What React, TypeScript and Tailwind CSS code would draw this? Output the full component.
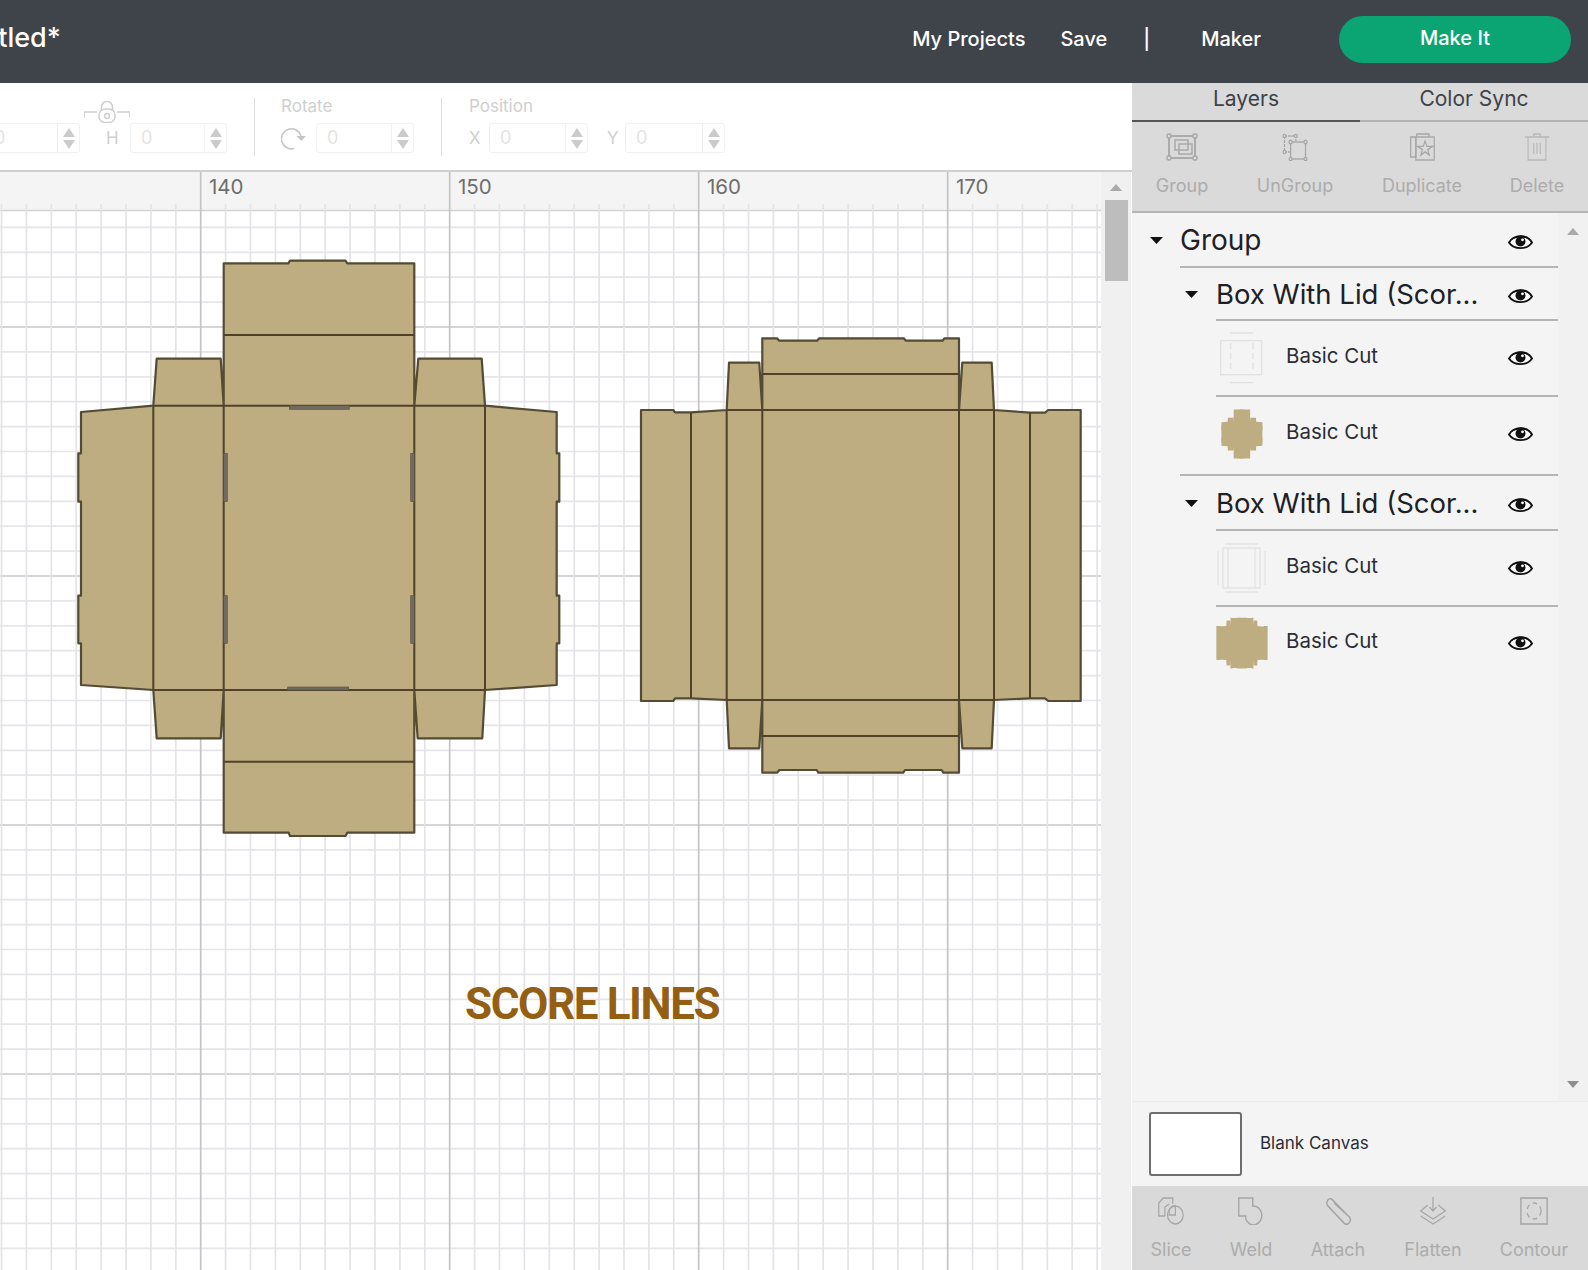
import type { ReactNode } from 'react';

const BOX_ONE =
  'M223.7 263.3H288.3L290 260.7H345.5L347.3 263.3H414.3V405.7L418.3 358.7H481.7L485 405.7L556.7 412V453.3H559.3V501.7H556.7V595.7H559.3V643.3H556.7V685L485 690L482.3 738.3H417.7L414.3 690V832.7H347.3L345.5 836H290L288.7 832.7H223.7V690L220.7 738.3H156.7L153.3 690L81 685V643.3H78.3V595.7H81V501.7H78.3V453.3H81V412L153.3 405.7L156.7 358.7H220.7L223.7 405.7Z';
const BOX_ONE_SCORES =
  'M153.3 405.7H485M153.3 690H485M153.3 405.7V690M223.7 405.7V690M414.3 405.7V690M485 405.7V690M223.7 335H414.3M223.7 761.7H414.3';
const BOX_TWO =
  'M762.3 338.3H777.3L779 340.7H817.3L819 338.3H904L905.7 340.7H942.7L944.3 338.3H959V410L962.3 362.7H991.7L994 410L1030 412.7H1045L1048.3 410H1080.7V701H1048.3L1045 698.3H1030L994 700L991.7 748.3H962.3L959 700V772.7H943.3L941.7 770H905L903.3 772.7H818.3L816.7 770H779.3L777.3 772.7H762.3V700L759.3 748.3H729L726.7 700L691 698.3H675L673.3 701H641V410H673.3L675 412.3H691L726.7 410L729 362.7H759.3L762.3 410Z';
const BOX_TWO_SCORES =
  'M726.7 410H994M726.7 700H994M726.7 410V700M762.3 410V700M959 410V700M994 410V700M691 412.7V698.3M1030 412.7V698.3M762.3 374H959M762.3 736H959';

const MINOR = 24.9;

function Grid() {
  const columns = Array.from({ length: 45 }, (_, i) => i * MINOR + 1.5);
  const rows = Array.from({ length: 43 }, (_, i) => 227.4 + i * MINOR);

  return (
    <svg viewBox="0 172 1101 1098" className="absolute left-0 top-0 h-[1098px] w-[1101px] blur-[0.4px]">
      {rows.map((y, i) => (
        <line key={y} x1="0" x2="1101" y1={y} y2={y} stroke={(i - 4) % 10 === 0 ? '#c9c9cc' : '#e6e6ea'} strokeWidth={1.7} />
      ))}
      <line x1="0" x2="1101" y1="210.5" y2="210.5" stroke="#d4d4d4" strokeWidth={1.6} />
      {columns.map((x, i) =>
        (i - 8) % 10 === 0 ? (
          <line key={x} x1={x} x2={x} y1="172" y2="1270" stroke="#c4c4c6" strokeWidth={1.7} />
        ) : (
          <line key={x} x1={x} x2={x} y1="204" y2="1270" stroke="#e4e4e8" strokeWidth={1.7} />
        ),
      )}
      <path d={BOX_ONE} fill="#bdad80" stroke="#544b35" strokeWidth={2.2} strokeLinejoin="round" />
      <path d={BOX_ONE_SCORES} fill="none" stroke="#4f4229" strokeWidth={2} />
      <g fill="#6f6b60" stroke="#57523f" strokeWidth={0.6}>
        <rect x="289.3" y="405.7" width="60" height="3.6" />
        <rect x="287.7" y="687" width="61" height="3" />
        <rect x="223.7" y="453.3" width="3.6" height="48.4" />
        <rect x="223.7" y="595.7" width="3.6" height="47.6" />
        <rect x="410.7" y="453.3" width="3.6" height="48.4" />
        <rect x="410.7" y="595.7" width="3.6" height="47.6" />
      </g>
      <path d={BOX_TWO} fill="#bdad80" stroke="#544b35" strokeWidth={2.2} strokeLinejoin="round" />
      <path d={BOX_TWO_SCORES} fill="none" stroke="#4f4229" strokeWidth={2} />
    </svg>
  );
}

function Stepper() {
  return (
    <svg viewBox="0 0 12 21" className="h-[21px] w-[12px]" fill="#cbcbcb">
      <path d="M6 0L12 9H0Z" />
      <path d="M6 21L12 12H0Z" />
    </svg>
  );
}

function NumberBox({ width }: { width: string }) {
  return (
    <div className={`flex h-[30px] items-stretch rounded-[3px] border border-[#f1f1f1] ${width}`}>
      <span className="flex-1 pl-[10px] text-[18px] leading-[28px] text-[#e4e4e4]">0</span>
      <span className="flex w-[22px] items-center justify-center border-l border-[#f1f1f1]">
        <Stepper />
      </span>
    </div>
  );
}

function Toolbar() {
  return (
    <div className="flex h-[89px] shrink-0 border-b-2 border-[#cfcfcf] bg-white text-[#cfcfcf]">
      <div className="ml-[-17px] flex flex-col">
        <div className="h-[40px] pl-[101px] pt-[18px]">
          <svg viewBox="0 0 46 22" className="h-[22px] w-[46px]" fill="none" stroke="#cfcfcf" strokeWidth={1.5}>
            <path d="M0 17V11H13M46 17V11H33" />
            <path d="M17.5 9V6a5.5 5.5 0 0 1 11 0V9" />
            <rect x="15" y="8" width="16" height="13.5" rx="6" />
            <circle cx="23" cy="15" r="2.4" />
          </svg>
        </div>
        <div className="flex items-center">
          <NumberBox width="w-[97px]" />
          <span className="ml-[26px] w-[24px] pt-[1px] text-[17px]">H</span>
          <NumberBox width="w-[97px]" />
        </div>
      </div>
      <div className="ml-[27px] mr-[26px] mt-[15px] h-[58px] w-px bg-[#dcdcdc]" />
      <div className="flex flex-col">
        <div className="h-[40px] pt-[11px] text-[17px] leading-[24px]">Rotate</div>
        <div className="flex items-center">
          <svg viewBox="0 0 26 23" className="mr-[9px] h-[23px] w-[26px]" fill="none" stroke="#c6c6c6" strokeWidth={1.6}>
            <path d="M20 9A10 10 0 1 0 13 21.5" />
            <path d="M15.5 9H25L20.2 14Z" fill="#c6c6c6" stroke="none" />
          </svg>
          <NumberBox width="w-[98px]" />
        </div>
      </div>
      <div className="mx-[27px] mt-[15px] h-[58px] w-px bg-[#dcdcdc]" />
      <div className="flex flex-col">
        <div className="h-[40px] pt-[11px] text-[17px] leading-[24px]">Position</div>
        <div className="flex items-center">
          <span className="w-[20px] pt-[1px] text-[17px]">X</span>
          <NumberBox width="w-[99px]" />
          <span className="ml-[19px] w-[18px] pt-[1px] text-[17px]">Y</span>
          <NumberBox width="w-[100px]" />
        </div>
      </div>
    </div>
  );
}

function Ruler() {
  const labels = [
    { text: '140', left: 'left-[209px]' },
    { text: '150', left: 'left-[458px]' },
    { text: '160', left: 'left-[707px]' },
    { text: '170', left: 'left-[956px]' },
  ];

  return (
    <div className="h-[39px] shrink-0 bg-[#f4f4f4]">
      {labels.map((label) => (
        <span key={label.text} className={`absolute top-[2px] z-10 text-[20.5px] leading-[26px] text-[#6e6e6e] ${label.left}`}>
          {label.text}
        </span>
      ))}
    </div>
  );
}

function Canvas() {
  return (
    <div className="flex min-w-0 flex-1 flex-col">
      <Toolbar />
      <div className="flex min-h-0 flex-1">
        <div className="relative w-[1101px] shrink-0 overflow-hidden bg-white">
          <Ruler />
          <Grid />
          <span className="absolute left-[465px] top-[806px] font-[Roboto,sans-serif] text-[44px] font-bold leading-[52px] tracking-[-1.4px] text-[#955f13]">
            SCORE LINES
          </span>
        </div>
        <div className="w-[30px] shrink-0 bg-[#f0f0f0]">
          <svg viewBox="0 0 12 7" className="ml-[9px] mt-[12px] h-[7px] w-[12px]" fill="#a9a9a9">
            <path d="M6 0L12 7H0Z" />
          </svg>
          <div className="ml-[4px] mt-[9px] h-[81px] w-[23px] bg-[#bdbdbd]" />
        </div>
      </div>
    </div>
  );
}

function Eye({ className = '' }: { className?: string }) {
  return (
    <svg viewBox="0 0 25 18" className={`h-[18px] w-[25px] shrink-0 ${className}`}>
      <path d="M1 9.5C6 1 19 1 24 9.5C19 17 6 17 1 9.5Z" fill="#fff" stroke="#111" strokeWidth={1.9} />
      <path d="M3 7C8 1 17 1 22 7C17 3.5 8 3.5 3 7Z" fill="#111" />
      <circle cx="12.5" cy="8.5" r="5" fill="#111" />
      <circle cx="14.5" cy="6.8" r="1.4" fill="#fff" />
    </svg>
  );
}

function Caret() {
  return (
    <svg viewBox="0 0 13 7" className="h-[7px] w-[13px]" fill="#111">
      <path d="M0 0H13L6.5 7Z" />
    </svg>
  );
}

type GroupRowProps = {
  label: string;
  slot: string;
  caret: string;
  height: string;
  size: string;
};

function GroupRow({ label, slot, caret, height, size }: GroupRowProps) {
  return (
    <div className={`flex ${height}`}>
      <div className={`flex items-center ${slot} ${caret}`}>
        <Caret />
      </div>
      <div className="flex flex-1 items-center justify-between border-b-2 border-[#b5b5b5] pr-[25px]">
        <span className={`leading-[36px] text-[#1d2026] ${size}`}>{label}</span>
        <Eye className="mt-[4px]" />
      </div>
    </div>
  );
}

function BasicRow({ thumb, height, line }: { thumb: ReactNode; height: string; line: boolean }) {
  return (
    <div className={`ml-[84px] flex items-center pr-[25px] ${height} ${line ? 'border-b-2 border-[#b5b5b5]' : 'pb-[4px]'}`}>
      <div className="flex w-[70px] items-center">{thumb}</div>
      <span className="flex-1 pb-[4px] text-[20.5px] leading-[28px] text-[#2a2d33]">Basic Cut</span>
      <Eye />
    </div>
  );
}

function LayerList() {
  return (
    <div className="flex min-h-0 flex-1">
      <div className="flex-1 bg-[#f4f4f4]">
        <GroupRow label="Group" slot="w-[48px]" caret="pl-[18px]" height="h-[55px]" size="text-[28px]" />
        <div className="ml-[48px] border-b-2 border-[#b5b5b5]">
          <div className="ml-[-48px]">
            <GroupRow label="Box With Lid (Scor..." slot="w-[84px]" caret="pl-[53px]" height="h-[53px]" size="text-[27.5px]" />
            <BasicRow
              height="h-[76px]"
              line
              thumb={
                <svg viewBox="0 0 43 52" className="ml-[4px] h-[52px] w-[43px]" fill="none" stroke="#e0e0e0" strokeWidth={1.3}>
                  <rect x="0.7" y="8.7" width="41" height="34" />
                  <path d="M10 1H33M10 50.7H33" />
                  <path d="M10.7 11V40M33 11V40" strokeDasharray="6 4" />
                </svg>
              }
            />
            <BasicRow
              height="h-[77px]"
              line={false}
              thumb={
                <svg viewBox="78 258 484 580" className="ml-[4px] h-[50px] w-[44px] blur-[0.4px]">
                  <path d={BOX_ONE} fill="#bdad80" />
                </svg>
              }
            />
          </div>
        </div>
        <GroupRow label="Box With Lid (Scor..." slot="w-[84px]" caret="pl-[53px]" height="h-[55px]" size="text-[27.5px]" />
        <BasicRow
          height="h-[76px]"
          line
          thumb={
            <svg viewBox="0 0 49 50" className="ml-[1px] h-[50px] w-[49px]" fill="none" stroke="#e2e2e2" strokeWidth={1.3}>
              <path d="M6 5H43V45H6ZM11 5V45M38 5V45" />
              <path d="M1 8V42M48 8V42M8 1H41M8 49H41" />
            </svg>
          }
        />
        <BasicRow
          height="h-[76px]"
          line={false}
          thumb={
            <svg viewBox="638 335 446 440" className="h-[52px] w-[52px] blur-[0.4px]">
              <path d={BOX_TWO} fill="#bdad80" />
            </svg>
          }
        />
      </div>
      <div className="flex w-[30px] shrink-0 flex-col items-center justify-between bg-[#f1f1f1] pb-[13px] pt-[15px]">
        <svg viewBox="0 0 12 7" className="h-[7px] w-[12px]" fill="#a9a9a9">
          <path d="M6 0L12 7H0Z" />
        </svg>
        <svg viewBox="0 0 12 7" className="h-[7px] w-[12px]" fill="#8e8e8e">
          <path d="M6 7L12 0H0Z" />
        </svg>
      </div>
    </div>
  );
}

function ToolIcon({ children, width = 'w-[32px]' }: { children: ReactNode; width?: string }) {
  return (
    <svg viewBox="0 0 32 28" preserveAspectRatio="none" className={`h-[28px] ${width}`} fill="none" stroke="#a6a6a6" strokeWidth={1.4}>
      {children}
    </svg>
  );
}

function Tool({ label, width, icon }: { label: string; width: string; icon: ReactNode }) {
  return (
    <div className={`flex shrink-0 flex-col items-center ${width}`}>
      {icon}
      <span className="mt-[14px] text-[18px] leading-[22px] text-[#acacac]">{label}</span>
    </div>
  );
}

function TopTools() {
  return (
    <div className="flex h-[91px] shrink-0 border-b-2 border-[#b5b5b5] bg-[#dadada] pt-[11px]">
      <Tool
        label="Group"
        width="w-[100px]"
        icon={
          <ToolIcon>
            <rect x="3" y="3" width="26" height="22" strokeWidth={1.8} />
            <rect x="1" y="1" width="4" height="4" rx="1.5" fill="#dadada" />
            <rect x="27" y="1" width="4" height="4" rx="1.5" fill="#dadada" />
            <rect x="1" y="23" width="4" height="4" rx="1.5" fill="#dadada" />
            <rect x="27" y="23" width="4" height="4" rx="1.5" fill="#dadada" />
            <rect x="9" y="7" width="13" height="10" />
            <rect x="13" y="11" width="13" height="10" />
          </ToolIcon>
        }
      />
      <Tool
        label="UnGroup"
        width="w-[126px]"
        icon={
          <ToolIcon width="w-[28px]">
            <path d="M4 3H17V8M4 3V19M4 19H10" strokeDasharray="3 1" />
            <rect x="11" y="9" width="17" height="17" />
            <circle cx="4" cy="3" r="1.6" fill="#dadada" />
            <circle cx="17" cy="3" r="1.6" fill="#dadada" />
            <circle cx="4" cy="19" r="1.6" fill="#dadada" />
            <circle cx="11" cy="9" r="1.8" fill="#dadada" />
            <circle cx="28" cy="9" r="1.8" fill="#dadada" />
            <circle cx="11" cy="26" r="1.6" fill="#dadada" />
            <circle cx="28" cy="26" r="1.6" fill="#dadada" />
          </ToolIcon>
        }
      />
      <Tool
        label="Duplicate"
        width="w-[128px]"
        icon={
          <ToolIcon width="w-[28px]">
            <path d="M10 4V1H24V4M3 4H9V24H3Z" />
            <rect x="9" y="4" width="21" height="23" />
            <path d="M19.5 8L21.6 13.4H28L22.6 16.6L24.3 22L19.5 18.8L14.7 22L16.4 16.6L11 13.4H17.4Z" />
          </ToolIcon>
        }
      />
      <Tool
        label="Delete"
        width="w-[102px]"
        icon={
          <ToolIcon width="w-[26px]">
            <path d="M1 4H31M12 4V1H20V4" stroke="#b8b8b8" />
            <path d="M5 4V27H27V4" stroke="#b8b8b8" />
            <path d="M12 10V21M16 10V21M20 10V21" stroke="#b8b8b8" />
          </ToolIcon>
        }
      />
    </div>
  );
}

function BottomTools() {
  return (
    <div className="flex h-[84px] shrink-0 bg-[#d9d9d9] pt-[11px]">
      <Tool
        label="Slice"
        width="w-[78px]"
        icon={
          <ToolIcon width="w-[28px]">
            <path d="M9 19H2V6L7 1H18V7" />
            <path d="M9 19V10L14 7" />
            <circle cx="21" cy="18" r="9" />
            <path d="M14 13A7 7 0 0 1 21 9V18H14Z" />
          </ToolIcon>
        }
      />
      <Tool
        label="Weld"
        width="w-[82px]"
        icon={
          <ToolIcon width="w-[28px]">
            <path d="M2 1H18V9A9.5 9.5 0 1 1 10 22V19H2Z" strokeWidth={1.6} />
          </ToolIcon>
        }
      />
      <Tool
        label="Attach"
        width="w-[92px]"
        icon={
          <ToolIcon width="w-[27px]">
            <path d="M11 6L29 20A4.5 4.5 0 0 1 23 26.5L3.5 9A3.7 3.7 0 0 1 9 3L25 17" strokeWidth={1.7} />
          </ToolIcon>
        }
      />
      <Tool
        label="Flatten"
        width="w-[98px]"
        icon={
          <ToolIcon width="w-[28px]">
            <path d="M16 0V14M12 10L16 14L20 10" />
            <path d="M10 8L2 14L16 22L30 14L22 8" />
            <path d="M2 19L16 27L30 19" />
          </ToolIcon>
        }
      />
      <Tool
        label="Contour"
        width="w-[104px]"
        icon={
          <ToolIcon width="w-[28px]">
            <rect x="1" y="1" width="30" height="26" strokeWidth={1.6} />
            <circle cx="16" cy="14" r="8" strokeDasharray="5 4" />
          </ToolIcon>
        }
      />
    </div>
  );
}

function SidePanel() {
  return (
    <div className="flex w-[456px] shrink-0 flex-col">
      <div className="flex h-[39px] shrink-0 bg-[#dadada] text-[21px] leading-[32px] text-[#3d4248]">
        <div className="w-[228px] border-b-2 border-[#555] text-center">Layers</div>
        <div className="flex-1 border-b-2 border-[#b3b3b3] text-center">Color Sync</div>
      </div>
      <TopTools />
      <LayerList />
      <div className="flex h-[85px] shrink-0 items-center border-t border-[#ebebeb] bg-[#f4f4f4] pl-[17px]">
        <div className="h-[64px] w-[93px] rounded-[3px] border-2 border-[#6e6e6e] bg-white" />
        <span className="ml-[18px] text-[17px] text-[#2a2d33]">Blank Canvas</span>
      </div>
      <BottomTools />
    </div>
  );
}

function Header() {
  return (
    <header className="flex h-[83px] shrink-0 items-center bg-[#3f444b] text-[20px] font-medium text-white">
      <span className="ml-[-54px] pb-[6px] text-[27px]">Untitled*</span>
      <nav className="ml-auto flex items-center pb-[6px]">
        <span>My Projects</span>
        <span className="ml-[35px]">Save</span>
        <span className="ml-[36px]">|</span>
        <span className="ml-[51px]">Maker</span>
      </nav>
      <button type="button" className="mb-[4px] ml-[78px] mr-[17px] h-[47px] w-[232px] rounded-full bg-[#0aa573] pb-[4px] text-white">
        Make It
      </button>
    </header>
  );
}

export default function App() {
  return (
    <div className="flex h-[1270px] w-[1588px] flex-col overflow-hidden bg-white font-[Inter,sans-serif]">
      <Header />
      <div className="flex min-h-0 flex-1">
        <Canvas />
        <SidePanel />
      </div>
    </div>
  );
}
